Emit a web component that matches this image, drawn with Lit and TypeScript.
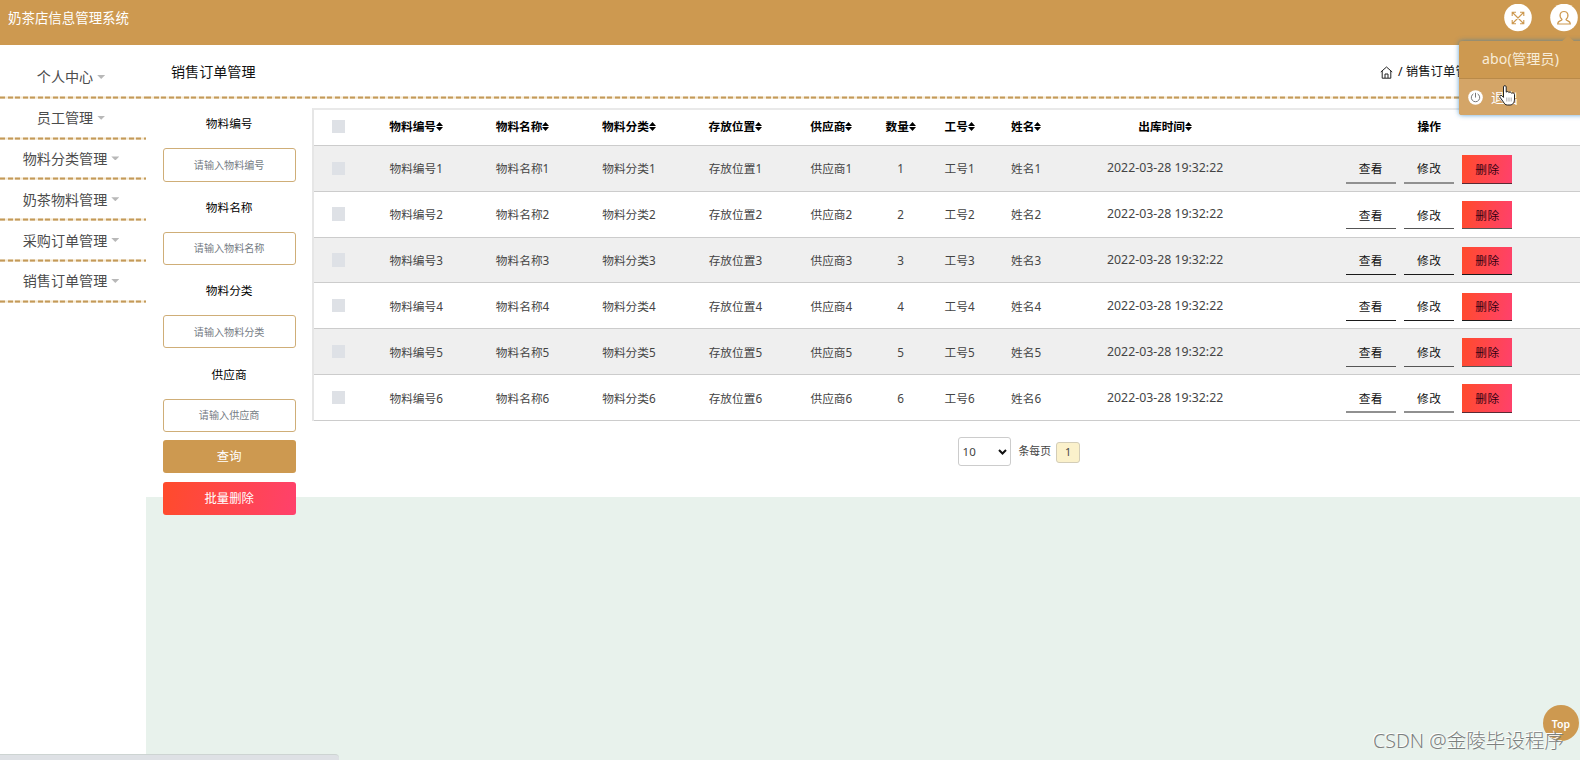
import { LitElement, html, css } from "lit";
import { customElement } from "lit/decorators.js";

const NAV = ["个人中心", "员工管理", "物料分类管理", "奶茶物料管理", "采购订单管理", "销售订单管理"];
const FILTERS = ["物料编号", "物料名称", "物料分类", "供应商"];
const COLUMNS = ["物料编号", "物料名称", "物料分类", "存放位置", "供应商", "数量", "工号", "姓名", "出库时间"];
const ROWS = [
  { n: 1, line: "soft" },
  { n: 2, line: "mid" },
  { n: 3, line: "" },
  { n: 4, line: "" },
  { n: 5, line: "mid" },
  { n: 6, line: "soft" },
];

@customElement("order-table")
export class OrderTable extends LitElement {
  static styles = css`
    :host { display: block; width: 1275px; flex: none; }
    .table { box-sizing: border-box; border: 1px solid #ccc; border-top: 2px solid #e9e9e9; border-left: 2px solid #e6e6e6; border-bottom: 0; }
    .row { display: grid; grid-template-columns: 49px 106.4px 106.4px 106.4px 106.4px 85.6px 53px 65px 68px 210px 318px;
      box-sizing: border-box; height: 45.85px; align-items: center; justify-items: center;
      border-bottom: 1px solid #ccc; color: #444; font-size: 11.7px; white-space: nowrap; }
    .row.odd { background: #efefef; }
    .head { height: 36.2px; padding-bottom: 1.6px; color: #000; font-weight: 600; }
    .check { width: 13.3px; height: 13.3px; background: #dee1e6; }
    .th { display: flex; align-items: center; }
    .sort { width: 7px; height: 9px; }
    .date { font-size: 12.3px; padding-top: 1px; }
    .ops { display: flex; gap: 8.3px; padding-top: 2px; }
    .op { box-sizing: border-box; width: 50px; height: 28.5px; display: flex; align-items: center; justify-content: center;
      border-bottom: 1px solid #1a1a1a; color: #111; font-size: 11.7px; letter-spacing: .4px; }
    .del { background: linear-gradient(100deg, #ff4b2b, #ff416c); color: #301; }
    .mid .op { border-bottom-color: #555; }
    .soft .op { border-bottom: 2px solid #909090; }
    .soft .del { border-bottom: 1px solid #5a2a34; }
  `;
  render() {
    return html`<div class="table">
      <div class="row head">
        <span class="check"></span>
        ${COLUMNS.map((c) => html`<span class="th">${c}<svg class="sort" viewBox="0 0 7 9"><path d="M3.500 0 7 4H0zM3.500 9 0 5h7z" /></svg></span>`)}
        <span>操作</span>
      </div>
      ${ROWS.map(({ n, line }) => html`<div class="row ${n % 2 ? "odd" : ""} ${line}">
        <span class="check"></span>
        <span>物料编号${n}</span><span>物料名称${n}</span><span>物料分类${n}</span><span>存放位置${n}</span>
        <span>供应商${n}</span><span>${n}</span><span>工号${n}</span><span>姓名${n}</span>
        <span class="date">2022-03-28 19:32:22</span>
        <div class="ops"><span class="op">查看</span><span class="op">修改</span><span class="op del">删除</span></div>
      </div>`)}
    </div>`;
  }
}

@customElement("user-menu")
export class UserMenu extends LitElement {
  static styles = css`
    :host { position: absolute; z-index: 3; left: 1459px; top: 41px; width: 140px; height: 74px; display: flex; flex-direction: column;
      background: #cd9950; border-radius: 3px; box-shadow: 0 0 5px rgba(30, 120, 190, .7); color: #f8ecd8; }
    .tip { position: absolute; left: 102px; top: -5px; width: 14px; height: 6px; background: #cd9950; clip-path: polygon(50% 0, 100% 100%, 0 100%); }
    .name { box-sizing: border-box; height: 37.5px; padding: 1px 0 0 23px; display: flex; align-items: center; font-size: 14.1px; border-bottom: 1px solid #b98a49; letter-spacing: .15px; }
    .exit { flex: 1; display: flex; align-items: center; gap: 8px; padding: 2px 0 0 9px; background: #d4a567; border-radius: 0 0 3px 3px; font-size: 13.6px; color: #fff; }
    .power { width: 15px; height: 15px; }
    .hand { position: absolute; left: 40px; top: 44px; width: 17px; height: 21px; }
  `;
  render() {
    return html`<span class="tip"></span>
      <div class="name">abo(管理员)</div>
      <div class="exit">
        <svg class="power" viewBox="0 0 15 15"><circle cx="7.5" cy="7.5" r="7.3" fill="#fff" /><path d="M5.4 3.9a4.2 4.2 0 1 0 4.2 0M7.5 2.8v4.7" fill="none" stroke="#777" stroke-width="1" /></svg>
        <span>退出</span>
      </div>
      <svg class="hand" viewBox="0 0 17 21"><path d="M4.500 1.900c0-1.700 2.700-1.700 2.700 0v5.300c.5-1 2.400-.9 2.700.4.6-.9 2.400-.6 2.700.7.9-.8 2.900-.3 2.900 1.300v4.400c0 3.600-1.800 6-4.500 6H8.300c-2 0-2.800-1.300-3.900-3L1 12.200c-.8-1.500.9-2.600 2-1.400l1.500 1.600z" fill="#fff" stroke="#222" stroke-width="1" /><path d="M7.800 12.500v4M10 12.500v4M12.200 12.500v4" stroke="#888" stroke-width=".7" /></svg>`;
  }
}

@customElement("app-root")
export class AppRoot extends LitElement {
  static styles = css`
    :host { display: flex; flex-direction: column; position: relative; width: 1580px; height: 760px; overflow: hidden; background: #fff;
      font-family: "Noto Sans", "Noto Sans CJK SC", sans-serif; font-weight: 400; line-height: 1.2; }
    .top { flex: none; box-sizing: border-box; height: 45px; display: flex; justify-content: space-between; padding: 4px 2px 0 8px; background: #cd9950; color: #fff; font-size: 13.45px; }
    .brand { padding-top: 6px; }
    .tools { display: flex; gap: 18px; }
    .tool { width: 28px; height: 28px; }
    .body { flex: 1; display: flex; min-height: 0; }
    .nav { width: 146px; flex: none; padding-top: 12px; }
    .item { height: 40.8px; box-sizing: border-box; display: flex; align-items: center; justify-content: center; gap: 4px; padding: 1px 4px 0 0; font-size: 14.1px; color: #4c4c4c; }
    .dash { position: relative; }
    .dash::after { content: ""; position: absolute; left: 0; right: 0; bottom: -1px; height: 3px;
      background: linear-gradient(rgba(255, 255, 255, .45) 0 1px, transparent 1px 2px, rgba(255, 255, 255, .35) 2px), repeating-linear-gradient(90deg, #c49a58 0 5px, #f6e9d2 5px 7.56px); }
    .caret { width: 8px; height: 4px; margin-bottom: 2px; background: #b8b8b8; clip-path: polygon(0 0, 100% 0, 50% 100%); }
    .main { flex: 1; min-width: 0; background: #e8f2ec; }
    .panel { background: #fff; height: 452.4px; }
    .crumbs { height: 53px; box-sizing: border-box; display: flex; justify-content: space-between; align-items: center; padding: 2px 85px 0 25px; font-size: 14.1px; color: #111; }
    .path { display: flex; align-items: center; gap: 5px; width: 115px; white-space: nowrap; font-size: 12.4px; }
    .home { width: 13px; height: 13px; flex: none; margin-bottom: 1px; }
    .content { display: flex; }
    .filters { flex: none; width: 133.3px; padding: 0 16.2px 0 16.5px; display: flex; flex-direction: column; }
    .label { height: 50.1px; display: flex; align-items: center; justify-content: center; font-size: 11.7px; color: #000; }
    .label:first-child { height: 50.4px; }
    .input, .btn { box-sizing: border-box; height: 33.3px; display: flex; align-items: center; justify-content: center; border-radius: 3px; }
    .input { border: 1px solid #cfae78; background: #fff; color: #757c84; font-size: 10.1px; }
    .btn { margin-top: 8.3px; padding-top: 2px; color: #fff; background: #cd9950; font-size: 12.3px; }
    .batch { background: linear-gradient(100deg, #ff4b2b, #ff416c); }
    .results { padding-top: 9.7px; }
    .pager { display: flex; align-items: center; margin: 16.5px 0 0 645.6px; font-size: 10.8px; color: #444; }
    .select { box-sizing: border-box; width: 53px; height: 29px; display: flex; align-items: center; justify-content: space-between; border: 1px solid #ccc; border-radius: 3px; padding: 0 3px 0 4px; font-size: 11.5px; }
    .chev { width: 9px; height: 6px; }
    .per { margin: 0 5px 0 8px; }
    .page { box-sizing: border-box; width: 24px; height: 21.5px; margin-top: 1px; display: flex; align-items: center; justify-content: center; border: 1px solid #d3cdb8; border-radius: 3px; background: #fbf1cb; }
    .totop { position: absolute; left: 1543px; top: 705px; width: 36px; height: 36px; border-radius: 50%; background: #cd9950; color: #fff; font-size: 10.5px; font-weight: 600; display: flex; align-items: center; justify-content: center; padding-top: 2px; box-sizing: border-box; }
    .mark { position: absolute; left: 1373px; top: 730px; font-size: 19.6px; line-height: 22px; white-space: nowrap; font-weight: 300; color: #7c807e; text-shadow: -1px -1px 0 #fff; }
    .status { position: absolute; left: 0; top: 754px; width: 339px; height: 6px; box-sizing: border-box; background: #dee1e5; border-top: 1px solid #cdd4d2; border-top-right-radius: 4px; }
  `;
  render() {
    return html`
      <header class="top">
        <span class="brand">奶茶店信息管理系统</span>
        <div class="tools">
          <svg class="tool" viewBox="0 0 28 28"><circle cx="14" cy="13.500" r="13.800" fill="#fff" /><path d="M8.500 8.500l11 11M19.500 8.500l-11 11M8.200 12V8.200H12M16 8.200h3.800V12M19.800 16v3.800H16M12 19.800H8.200V16" fill="none" stroke="#cd9950" stroke-width="1.1" /></svg>
          <svg class="tool" viewBox="0 0 28 28"><circle cx="14" cy="13.500" r="13.800" fill="#fff" /><path d="M12 15.500C8.500 12 10 7.500 14 7.500s5.500 4.500 2 8c0 1.500 4.300.7 4.300 4.500H7.700c0-3.800 4.300-3 4.300-4.500z" fill="none" stroke="#cd9950" stroke-width="1.2" /></svg>
        </div>
      </header>
      <div class="body">
        <nav class="nav">${NAV.map((n) => html`<div class="item dash"><span>${n}</span><i class="caret"></i></div>`)}</nav>
        <main class="main">
          <section class="panel">
            <div class="crumbs dash"><span>销售订单管理</span>
              <div class="path"><svg class="home" viewBox="0 0 13 13"><path d="M.8 6 6.500 1l5.700 5M2.200 5v7.200h8.600V5M5 12V8h3v4" fill="none" stroke="#222" /></svg><span>/ 销售订单管理</span></div>
            </div>
            <div class="content">
              <div class="filters">
                ${FILTERS.map((f) => html`<div class="label">${f}</div><div class="input">请输入${f}</div>`)}
                <div class="btn">查询</div><div class="btn batch">批量删除</div>
              </div>
              <div class="results"><order-table></order-table>
                <div class="pager"><div class="select">10<svg class="chev" viewBox="0 0 9 6"><path d="M1 1l3.500 3.500L8 1" fill="none" stroke="#111" stroke-width="2" /></svg></div><span class="per">条每页</span><span class="page">1</span></div>
              </div>
            </div>
          </section>
        </main>
      </div>
      <user-menu></user-menu>
      <div class="totop">Top</div>
      <div class="mark">CSDN @金陵毕设程序</div>
      <div class="status"></div>`;
  }
}
